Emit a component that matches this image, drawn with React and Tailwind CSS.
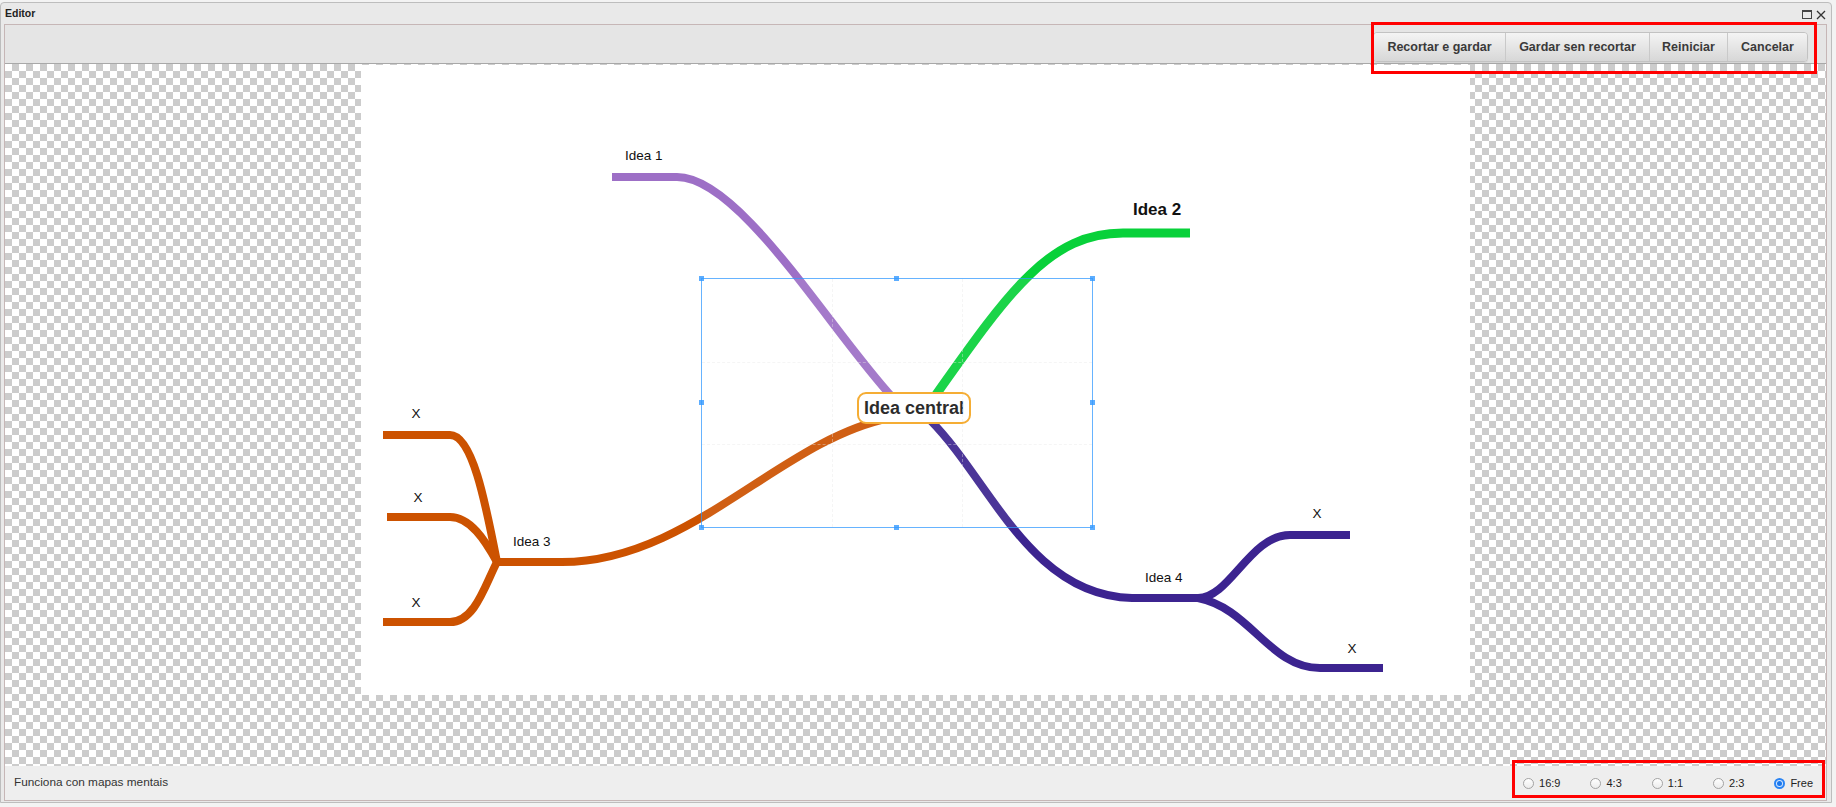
import React from 'react';

const buttons = [
  { label: 'Recortar e gardar', w: 'w-[131px]' },
  { label: 'Gardar sen recortar', w: 'w-[144px]' },
  { label: 'Reiniciar', w: 'w-[78px]' },
  { label: 'Cancelar', w: 'w-[80px]' },
];

const ratios = ['16:9', '4:3', '1:1', '2:3', 'Free'];

function Radio({ checked }) {
  if (checked) {
    return (
      <span className="w-[11px] h-[11px] rounded-full border-[2px] border-[#2a84f3] bg-[#d5e7fd] flex items-center justify-center">
        <span className="w-[5px] h-[5px] rounded-full bg-[#1b78ee]" />
      </span>
    );
  }
  return (
    <span className="w-[11px] h-[11px] rounded-full border border-[#a3a3a3] bg-linear-to-b from-white to-[#ececec]" />
  );
}

function MindMap() {
  const label = { fontFamily: '"Liberation Sans", Arial, sans-serif' };
  return (
    <svg width="1109" height="630" viewBox="361 65 1109 630" className="block">
      <g fill="none" strokeWidth="8" strokeLinecap="butt">
        {/* Idea 1 */}
        <path d="M612 177 H677 C740 177 830 330 893 398" stroke="#9d6fc6" />
        {/* Idea 2 */}
        <path d="M935 396 C1010 290 1050 233 1123 233 H1190" stroke="#08d13a" strokeWidth="9" />
        {/* Idea 3 */}
        <path d="M497 562 H562 C690 562 780 440 890 418" stroke="#cc5200" />
        <path d="M383 435 H450 C472 435 485 500 497 562" stroke="#cc5200" />
        <path d="M387 517 H450 C470 517 485 540 497 562" stroke="#cc5200" />
        <path d="M383 622 H450 C475 622 485 585 497 562" stroke="#cc5200" />
        {/* Idea 4 */}
        <path d="M930 420 C990 480 1030 596 1132 598 H1198" stroke="#3c2490" />
        <path d="M1198 598 C1230 598 1250 535 1290 535 H1350" stroke="#3c2490" />
        <path d="M1198 598 C1250 608 1270 668 1320 668 H1383" stroke="#3c2490" />
      </g>
      <rect x="858" y="393" width="112" height="30" rx="8" fill="#ffffff" stroke="#f5a623" strokeWidth="2" />
      <text x="914" y="414" textAnchor="middle" fontSize="18" fontWeight="700" fill="#1a1a1a" style={label}>
        Idea central
      </text>
      <g fill="#111111" fontSize="13.5" style={label}>
        <text x="625" y="160">Idea 1</text>
        <text x="513" y="546">Idea 3</text>
        <text x="1145" y="582">Idea 4</text>
        <text x="416" y="418" textAnchor="middle">X</text>
        <text x="418" y="502" textAnchor="middle">X</text>
        <text x="416" y="607" textAnchor="middle">X</text>
        <text x="1317" y="518" textAnchor="middle">X</text>
        <text x="1352" y="653" textAnchor="middle">X</text>
      </g>
      <text x="1133" y="215" fontSize="17" fontWeight="700" fill="#111111" style={label}>
        Idea 2
      </text>
    </svg>
  );
}

function CropBox() {
  const pt = 'absolute w-[5px] h-[5px] bg-[#3399ff]/80';
  const dash = 'border-dashed border-[#e6e6e6]/40';
  return (
    <div className="absolute left-[341px] top-[214px] w-[390px] h-[248px] outline outline-1 outline-[#3399ff]/75 bg-white/[0.08]">
      <div className={`absolute left-1/3 top-0 bottom-0 border-l ${dash}`} />
      <div className={`absolute left-2/3 top-0 bottom-0 border-l ${dash}`} />
      <div className={`absolute top-1/3 left-0 right-0 border-t ${dash}`} />
      <div className={`absolute top-2/3 left-0 right-0 border-t ${dash}`} />
      <span className={`${pt} -left-[3px] -top-[3px]`} />
      <span className={`${pt} left-[192px] -top-[3px]`} />
      <span className={`${pt} -right-[3px] -top-[3px]`} />
      <span className={`${pt} -left-[3px] top-[121px]`} />
      <span className={`${pt} -right-[3px] top-[121px]`} />
      <span className={`${pt} -left-[3px] -bottom-[3px]`} />
      <span className={`${pt} left-[192px] -bottom-[3px]`} />
      <span className={`${pt} -right-[3px] -bottom-[3px]`} />
    </div>
  );
}

export default function App() {
  return (
    <div
      className="relative w-[1836px] h-[807px] overflow-hidden bg-[#f3f3f3] text-[#333]"
      style={{ fontFamily: '"Liberation Sans", Arial, sans-serif' }}
    >
      <div className="mt-[2px] w-[1832px] h-[801px] bg-[#e9e9e9] border border-[#bdbdbd] rounded-t-[4px] flex flex-col">
        {/* title bar */}
        <div className="h-[21px] flex items-center justify-between pl-[4px] pr-[5px]">
          <span className="text-[10.5px] font-bold text-[#222]">Editor</span>
          <div className="flex items-center gap-[4px] pt-[2px]">
            <span className="w-[10px] h-[9px] border border-[#444] border-t-[2px]" />
            <svg width="10" height="10" viewBox="0 0 10 10" className="block">
              <path d="M1 1 L9 9 M9 1 L1 9" stroke="#333" strokeWidth="1.3" fill="none" />
            </svg>
          </div>
        </div>

        {/* frame */}
        <div className="ml-[3px] mr-[4px] border border-[#c6b6b6] flex flex-col">
          <div className="h-[39px] bg-[#e5e5e5] border-b border-[#a8a8a8] flex justify-end items-start pt-[7px] pr-[18px]">
            <div className="flex rounded-[4px] border border-[#c2c2c2] overflow-hidden shadow-[0_1px_1px_rgba(0,0,0,0.08)]">
              {buttons.map((b, i) => (
                <div
                  key={b.label}
                  className={`${b.w} h-[28px] flex items-center justify-center text-[12.5px] font-bold text-[#3a3a3a] bg-linear-to-b from-[#f4f4f4] to-[#d7d7d7] ${
                    i > 0 ? 'border-l border-[#c9c9c9]' : ''
                  }`}
                >
                  {b.label}
                </div>
              ))}
            </div>
          </div>

          <div className="h-[702px] pl-[356px] pt-[1px] bg-[conic-gradient(#cccccc_90deg,#ffffff_90deg_180deg,#cccccc_180deg_270deg,#ffffff_270deg)] bg-[length:14px_14px]">
            <div className="relative w-[1109px] h-[630px] bg-white">
              <MindMap />
              <CropBox />
            </div>
          </div>

          <div className="h-[34px] bg-[#eeeeee] flex items-center justify-between pl-[9px] pr-[13px]">
            <span className="text-[11.8px] text-[#333]">Funciona con mapas mentais</span>
            <div className="flex items-center gap-[30px]">
              {ratios.map((r) => (
                <label key={r} className="flex items-center gap-[5px] text-[11px] text-[#222]">
                  <Radio checked={r === 'Free'} />
                  {r}
                </label>
              ))}
            </div>
          </div>
        </div>
      </div>

      {/* annotation boxes */}
      <div className="absolute left-[1371px] top-[22px] w-[446px] h-[52px] border-[3px] border-[#ff0000]" />
      <div className="absolute left-[1512px] top-[760px] w-[313px] h-[38px] border-[3px] border-[#ff0000]" />
    </div>
  );
}
